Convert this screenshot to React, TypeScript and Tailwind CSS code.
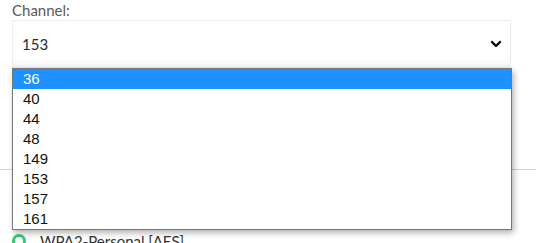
import { ChevronDown } from "lucide-react";

const channels = ["36", "40", "44", "48", "149", "153", "157", "161"];

export default function App() {
  return (
    <div className="relative w-[536px] h-[243px] overflow-hidden bg-white font-['Lato','Open_Sans',sans-serif]">
      {/* form behind */}
      <div className="pl-3">
        <div className="text-[15px] leading-[20px] text-[#5a5a5a]">Channel:</div>
        <div className="w-[499px] h-[48px] border border-[#ececec] shadow-[inset_0_-8px_8px_-6px_rgba(0,0,0,0.08)] flex items-center justify-between pl-[9px] pr-[6px]">
          <span className="text-[15px] text-[#2a2a35]">153</span>
          <ChevronDown className="w-4 h-4 text-black" strokeWidth={3.5} />
        </div>
        <div className="h-[101px]"></div>
        <div className="ml-[-12px] border-t border-[#cfd6dc] w-[548px]"></div>
        <div className="h-[64px]"></div>
        <div className="flex items-center gap-[14px] h-[14px]">
          <div className="w-[14px] h-[14px] rounded-full border-[3px] border-[#2ecc71] bg-white"></div>
          <span className="text-[15px] text-[#333]">WPA2-Personal [AES]</span>
        </div>
      </div>

      {/* open native-like dropdown list */}
      <div className="absolute left-3 top-[68px] w-[500px] border border-[#767676] bg-white shadow-[2px_3px_6px_rgba(0,0,0,0.3)] font-['Liberation_Sans',Arial,sans-serif]">
        {channels.map((c, i) => (
          <div
            key={c}
            className={`h-5 leading-5 pl-[10px] text-[15px] ${
              i === 0 ? "bg-[#1e90ff] text-white" : "text-[#111]"
            }`}
          >
            {c}
          </div>
        ))}
      </div>
    </div>
  );
}
